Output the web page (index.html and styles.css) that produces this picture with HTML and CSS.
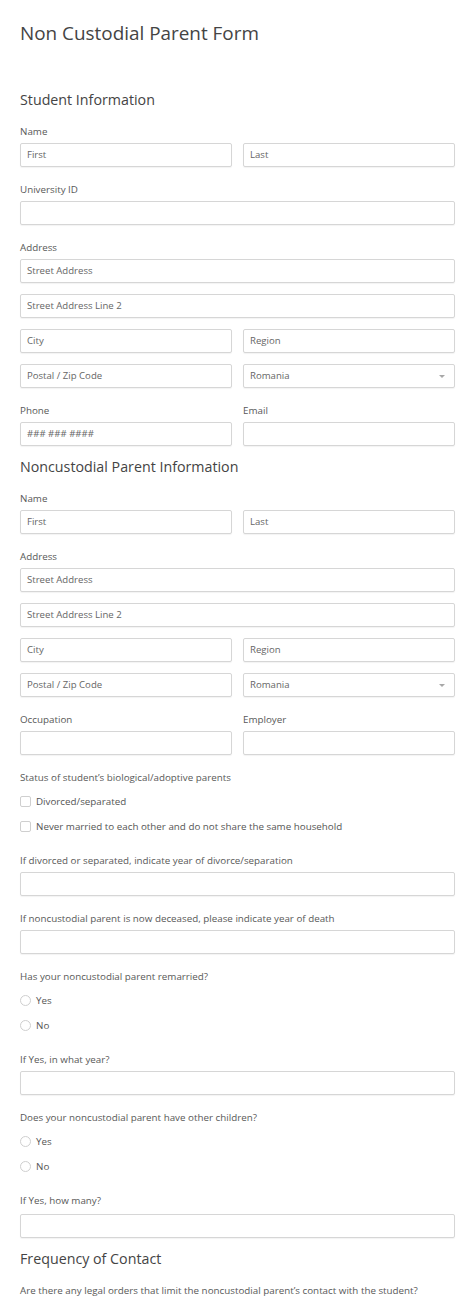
FILE: index.html
```html
<!DOCTYPE html>
<html lang="en">
<head>
<meta charset="utf-8">
<title>Non Custodial Parent Form</title>
<link rel="stylesheet" href="styles.css">
</head>
<body>
<main class="form">
  <h1 class="form-title">Non Custodial Parent Form</h1>

  <section class="section">
    <h2 class="section-title">Student Information</h2>
    <div class="field">
      <div class="label">Name</div>
      <div class="row">
        <div class="input">First</div>
        <div class="input">Last</div>
      </div>
    </div>
    <div class="field">
      <div class="label">University ID</div>
      <div class="input"></div>
    </div>
    <div class="field">
      <div class="label">Address</div>
      <div class="stack">
        <div class="input">Street Address</div>
        <div class="input">Street Address Line 2</div>
        <div class="row">
          <div class="input">City</div>
          <div class="input">Region</div>
        </div>
        <div class="row">
          <div class="input">Postal / Zip Code</div>
          <div class="input select">Romania<span class="caret"></span></div>
        </div>
      </div>
    </div>
    <div class="field row">
      <div>
        <div class="label">Phone</div>
        <div class="input">### ### ####</div>
      </div>
      <div>
        <div class="label">Email</div>
        <div class="input"></div>
      </div>
    </div>
  </section>

  <section class="section">
    <h2 class="section-title">Noncustodial Parent Information</h2>
    <div class="field">
      <div class="label">Name</div>
      <div class="row">
        <div class="input">First</div>
        <div class="input">Last</div>
      </div>
    </div>
    <div class="field">
      <div class="label">Address</div>
      <div class="stack">
        <div class="input">Street Address</div>
        <div class="input">Street Address Line 2</div>
        <div class="row">
          <div class="input">City</div>
          <div class="input">Region</div>
        </div>
        <div class="row">
          <div class="input">Postal / Zip Code</div>
          <div class="input select">Romania<span class="caret"></span></div>
        </div>
      </div>
    </div>
    <div class="field row">
      <div>
        <div class="label">Occupation</div>
        <div class="input"></div>
      </div>
      <div>
        <div class="label">Employer</div>
        <div class="input"></div>
      </div>
    </div>
    <div class="field">
      <div class="label">Status of student’s biological/adoptive parents</div>
      <div class="options">
        <div class="option"><span class="box"></span>Divorced/separated</div>
        <div class="option"><span class="box"></span>Never married to each other and do not share the same household</div>
      </div>
    </div>
    <div class="field">
      <div class="label">If divorced or separated, indicate year of divorce/separation</div>
      <div class="input"></div>
    </div>
    <div class="field">
      <div class="label">If noncustodial parent is now deceased, please indicate year of death</div>
      <div class="input"></div>
    </div>
    <div class="field">
      <div class="label">Has your noncustodial parent remarried?</div>
      <div class="options">
        <div class="option"><span class="radio"></span>Yes</div>
        <div class="option"><span class="radio"></span>No</div>
      </div>
    </div>
    <div class="field">
      <div class="label">If Yes, in what year?</div>
      <div class="input"></div>
    </div>
    <div class="field">
      <div class="label">Does your noncustodial parent have other children?</div>
      <div class="options">
        <div class="option"><span class="radio"></span>Yes</div>
        <div class="option"><span class="radio"></span>No</div>
      </div>
    </div>
    <div class="field">
      <div class="label label-wide">If Yes, how many?</div>
      <div class="input"></div>
    </div>
  </section>

  <section class="section">
    <h2 class="section-title">Frequency of Contact</h2>
    <div class="field">
      <div class="label">Are there any legal orders that limit the noncustodial parent’s contact with the student?</div>
    </div>
  </section>
</main>
</body>
</html>
```
FILE: styles.css
```css
html, body {
  margin: 0;
  padding: 0;
  background: #ffffff;
}

body {
  font-family: "Open Sans", "Liberation Sans", Arial, sans-serif;
  color: #555555;
}

.form {
  padding: 21px 19px 0 20px;
}

.form-title {
  margin: 0 0 44px;
  font-size: 18.9px;
  line-height: 24px;
  font-weight: 400;
  color: #444444;
}

.section {
  display: flex;
  flex-direction: column;
}

.section-title {
  margin: 0 0 14px;
  font-size: 14.25px;
  line-height: 22px;
  font-weight: 400;
  color: #444444;
}

.field {
  margin-bottom: 16px;
}

.section > .field:last-child {
  margin-bottom: 10px;
}

.label {
  font-size: 9.8px;
  line-height: 14px;
  color: #585858;
  margin-bottom: 4px;
}

.label-wide {
  margin-bottom: 6px;
}

.row {
  display: grid;
  grid-template-columns: 1fr 1fr;
  column-gap: 11px;
}

.stack {
  display: flex;
  flex-direction: column;
  gap: 11px;
}

.input {
  position: relative;
  box-sizing: border-box;
  height: 24px;
  border: 1px solid #d6d6d6;
  border-radius: 2px;
  box-shadow: 0 1px 1px rgba(0, 0, 0, 0.05);
  padding: 0 6px;
  font-size: 9.6px;
  line-height: 22px;
  color: #666666;
  background: #ffffff;
}

.caret {
  position: absolute;
  right: 9px;
  top: 10px;
  width: 0;
  height: 0;
  border-left: 3px solid transparent;
  border-right: 3px solid transparent;
  border-top: 3px solid #a8a8a8;
}

.options {
  display: flex;
  flex-direction: column;
  gap: 5px;
  margin-top: 6px;
  padding-bottom: 2px;
}

.option {
  display: flex;
  align-items: center;
  gap: 5px;
  height: 20px;
  font-size: 9.8px;
  color: #555555;
}

.box,
.radio {
  box-sizing: border-box;
  width: 11px;
  height: 11px;
  border: 1px solid #cfcfcf;
  background: #ffffff;
  flex: none;
}

.box {
  border-radius: 2px;
}

.radio {
  border-radius: 50%;
}
```
